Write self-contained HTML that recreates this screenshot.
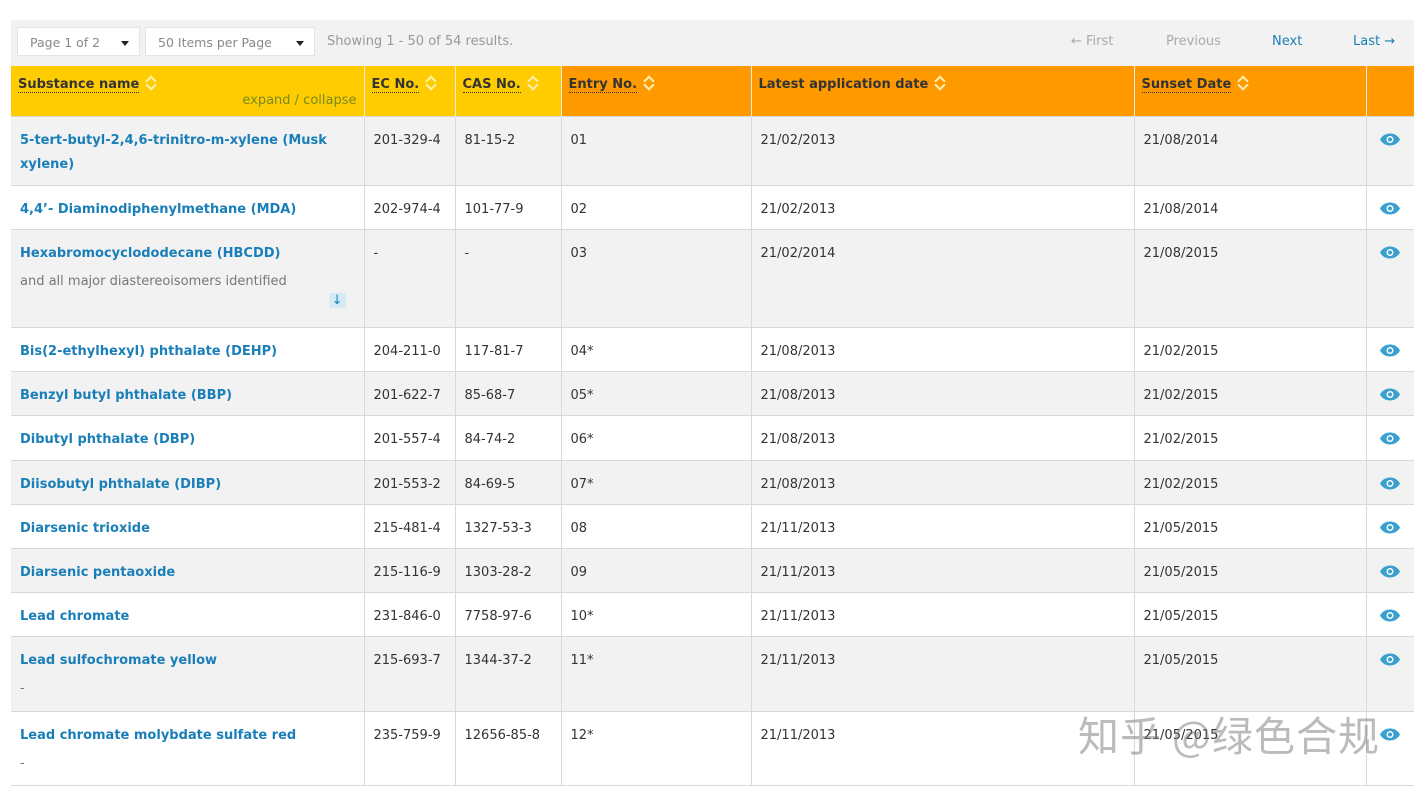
<!DOCTYPE html><html><head><meta charset="utf-8"><style>
body{margin:0;background:#fff;width:1421px;height:788px;overflow:hidden;font-family:"DejaVu Sans","Liberation Sans",sans-serif;font-size:13px;color:#333;position:relative}
.bar{position:absolute;left:11px;top:20px;width:1403px;height:46px;background:#f2f2f2}
.sel{position:absolute;top:7px;height:29px;background:#fff;border:1px solid #e4e4e4;color:#888;font-size:12.5px;line-height:29px;padding-left:12px;box-sizing:border-box}
.sel:after{content:"";position:absolute;right:10px;top:13px;border:4px solid transparent;border-top:5px solid #222}
.pg{position:absolute;top:14px;font-size:13px;color:#aaa}
table{position:absolute;left:11px;top:66px;border-collapse:collapse;table-layout:fixed;width:1403px}
th{height:42px;text-align:left;vertical-align:top;padding:8px 7px 0;font-size:13px;color:#333;position:relative;border-left:1px solid rgba(0,0,0,.08)}
th:first-child{border-left:none}
th span{border-bottom:1px dotted #333}
th.y{background:#fecc00}th.o{background:#fe9900}
.s{display:inline-block;width:11px;height:18px;vertical-align:-4px;margin-left:7px;position:relative}
.s:before,.s:after{content:"";position:absolute;left:1px;width:6px;height:6px;border:2.5px solid #fff2b0;border-width:2.5px 0 0 2.5px}
.s:before{top:3px;transform:rotate(45deg)}.s:after{top:7px;transform:rotate(225deg)}
td{vertical-align:top;padding:12px 9px 0;border-left:1px solid #d8d8d8;border-top:1px solid #d8d8d8;border-bottom:1px solid #d8d8d8;line-height:24px}
td:first-child{border-left:none}
tr.g td{background:#f2f2f2}
a{color:#1a7fb8;font-weight:bold;text-decoration:none}
.sub{color:#777;display:block;margin-top:4px}
.eye{display:block;width:20px;height:13px;margin:4px auto 0;}
.wm{position:absolute;left:1078px;top:703px;font-size:41px;color:rgba(120,120,120,.5);font-family:"Noto Sans CJK SC",sans-serif;letter-spacing:1px}
</style></head><body>
<div class="bar">
<div class="sel" style="left:6px;width:123px">Page 1 of 2</div>
<div class="sel" style="left:134px;width:170px">50 Items per Page</div>
<div class="pg" style="left:316px;color:#999">Showing 1 - 50 of 54 results.</div>
<div class="pg" style="left:1060px">← First</div>
<div class="pg" style="left:1155px">Previous</div>
<div class="pg" style="left:1261px;color:#1a7fb8">Next</div>
<div class="pg" style="left:1342px;color:#1a7fb8">Last →</div>
</div>
<table>
<colgroup><col style="width:353px"><col style="width:91px"><col style="width:106px"><col style="width:190px"><col style="width:383px"><col style="width:232px"><col style="width:48px"></colgroup>
<tr><th class="y"><span>Substance name</span><i class="s"></i><div style="position:absolute;right:7px;top:27px;font-weight:normal;color:#7a8a20">expand / collapse</div></th><th class="y"><span>EC No.</span><i class="s"></i></th><th class="y"><span>CAS No.</span><i class="s"></i></th><th class="o"><span>Entry No.</span><i class="s"></i></th><th class="o">Latest application date<i class="s"></i></th><th class="o"><span>Sunset Date</span><i class="s"></i></th><th class="o"></th></tr>
<tr class="g" style="height:69px"><td><a>5-tert-butyl-2,4,6-trinitro-m-xylene (Musk xylene)</a></td><td>201-329-4</td><td>81-15-2</td><td>01</td><td>21/02/2013</td><td>21/08/2014</td><td><svg class="eye" viewBox="0 0 20 13"><path d="M0 6.5C4 -1.5 16 -1.5 20 6.5C16 14.5 4 14.5 0 6.5Z" fill="#3aa0d0"/><circle cx="10" cy="6.5" r="3.5" fill="#fff"/><circle cx="10" cy="6.5" r="2" fill="#3aa0d0"/></svg></td></tr>
<tr style="height:44px"><td><a>4,4’- Diaminodiphenylmethane (MDA)</a></td><td>202-974-4</td><td>101-77-9</td><td>02</td><td>21/02/2013</td><td>21/08/2014</td><td><svg class="eye" viewBox="0 0 20 13"><path d="M0 6.5C4 -1.5 16 -1.5 20 6.5C16 14.5 4 14.5 0 6.5Z" fill="#3aa0d0"/><circle cx="10" cy="6.5" r="3.5" fill="#fff"/><circle cx="10" cy="6.5" r="2" fill="#3aa0d0"/></svg></td></tr>
<tr class="g" style="height:98px"><td><a>Hexabromocyclododecane (HBCDD)</a><span class="sub">and all major diastereoisomers identified</span><div style="text-align:right;margin-right:9px;color:#1a7fb8;line-height:14px"><span style="background:#d6eaf5;padding:0 3px">↓</span></div></td><td>-</td><td>-</td><td>03</td><td>21/02/2014</td><td>21/08/2015</td><td><svg class="eye" viewBox="0 0 20 13"><path d="M0 6.5C4 -1.5 16 -1.5 20 6.5C16 14.5 4 14.5 0 6.5Z" fill="#3aa0d0"/><circle cx="10" cy="6.5" r="3.5" fill="#fff"/><circle cx="10" cy="6.5" r="2" fill="#3aa0d0"/></svg></td></tr>
<tr style="height:44px"><td><a>Bis(2-ethylhexyl) phthalate (DEHP)</a></td><td>204-211-0</td><td>117-81-7</td><td>04*</td><td>21/08/2013</td><td>21/02/2015</td><td><svg class="eye" viewBox="0 0 20 13"><path d="M0 6.5C4 -1.5 16 -1.5 20 6.5C16 14.5 4 14.5 0 6.5Z" fill="#3aa0d0"/><circle cx="10" cy="6.5" r="3.5" fill="#fff"/><circle cx="10" cy="6.5" r="2" fill="#3aa0d0"/></svg></td></tr>
<tr class="g" style="height:44px"><td><a>Benzyl butyl phthalate (BBP)</a></td><td>201-622-7</td><td>85-68-7</td><td>05*</td><td>21/08/2013</td><td>21/02/2015</td><td><svg class="eye" viewBox="0 0 20 13"><path d="M0 6.5C4 -1.5 16 -1.5 20 6.5C16 14.5 4 14.5 0 6.5Z" fill="#3aa0d0"/><circle cx="10" cy="6.5" r="3.5" fill="#fff"/><circle cx="10" cy="6.5" r="2" fill="#3aa0d0"/></svg></td></tr>
<tr style="height:45px"><td><a>Dibutyl phthalate (DBP)</a></td><td>201-557-4</td><td>84-74-2</td><td>06*</td><td>21/08/2013</td><td>21/02/2015</td><td><svg class="eye" viewBox="0 0 20 13"><path d="M0 6.5C4 -1.5 16 -1.5 20 6.5C16 14.5 4 14.5 0 6.5Z" fill="#3aa0d0"/><circle cx="10" cy="6.5" r="3.5" fill="#fff"/><circle cx="10" cy="6.5" r="2" fill="#3aa0d0"/></svg></td></tr>
<tr class="g" style="height:44px"><td><a>Diisobutyl phthalate (DIBP)</a></td><td>201-553-2</td><td>84-69-5</td><td>07*</td><td>21/08/2013</td><td>21/02/2015</td><td><svg class="eye" viewBox="0 0 20 13"><path d="M0 6.5C4 -1.5 16 -1.5 20 6.5C16 14.5 4 14.5 0 6.5Z" fill="#3aa0d0"/><circle cx="10" cy="6.5" r="3.5" fill="#fff"/><circle cx="10" cy="6.5" r="2" fill="#3aa0d0"/></svg></td></tr>
<tr style="height:44px"><td><a>Diarsenic trioxide</a></td><td>215-481-4</td><td>1327-53-3</td><td>08</td><td>21/11/2013</td><td>21/05/2015</td><td><svg class="eye" viewBox="0 0 20 13"><path d="M0 6.5C4 -1.5 16 -1.5 20 6.5C16 14.5 4 14.5 0 6.5Z" fill="#3aa0d0"/><circle cx="10" cy="6.5" r="3.5" fill="#fff"/><circle cx="10" cy="6.5" r="2" fill="#3aa0d0"/></svg></td></tr>
<tr class="g" style="height:44px"><td><a>Diarsenic pentaoxide</a></td><td>215-116-9</td><td>1303-28-2</td><td>09</td><td>21/11/2013</td><td>21/05/2015</td><td><svg class="eye" viewBox="0 0 20 13"><path d="M0 6.5C4 -1.5 16 -1.5 20 6.5C16 14.5 4 14.5 0 6.5Z" fill="#3aa0d0"/><circle cx="10" cy="6.5" r="3.5" fill="#fff"/><circle cx="10" cy="6.5" r="2" fill="#3aa0d0"/></svg></td></tr>
<tr style="height:44px"><td><a>Lead chromate</a></td><td>231-846-0</td><td>7758-97-6</td><td>10*</td><td>21/11/2013</td><td>21/05/2015</td><td><svg class="eye" viewBox="0 0 20 13"><path d="M0 6.5C4 -1.5 16 -1.5 20 6.5C16 14.5 4 14.5 0 6.5Z" fill="#3aa0d0"/><circle cx="10" cy="6.5" r="3.5" fill="#fff"/><circle cx="10" cy="6.5" r="2" fill="#3aa0d0"/></svg></td></tr>
<tr class="g" style="height:75px"><td><a>Lead sulfochromate yellow</a><span class="sub">-</span></td><td>215-693-7</td><td>1344-37-2</td><td>11*</td><td>21/11/2013</td><td>21/05/2015</td><td><svg class="eye" viewBox="0 0 20 13"><path d="M0 6.5C4 -1.5 16 -1.5 20 6.5C16 14.5 4 14.5 0 6.5Z" fill="#3aa0d0"/><circle cx="10" cy="6.5" r="3.5" fill="#fff"/><circle cx="10" cy="6.5" r="2" fill="#3aa0d0"/></svg></td></tr>
<tr style="height:74px"><td><a>Lead chromate molybdate sulfate red</a><span class="sub">-</span></td><td>235-759-9</td><td>12656-85-8</td><td>12*</td><td>21/11/2013</td><td>21/05/2015</td><td><svg class="eye" viewBox="0 0 20 13"><path d="M0 6.5C4 -1.5 16 -1.5 20 6.5C16 14.5 4 14.5 0 6.5Z" fill="#3aa0d0"/><circle cx="10" cy="6.5" r="3.5" fill="#fff"/><circle cx="10" cy="6.5" r="2" fill="#3aa0d0"/></svg></td></tr>
</table>
<div class="wm">知乎 @绿色合规</div>
</body></html>
